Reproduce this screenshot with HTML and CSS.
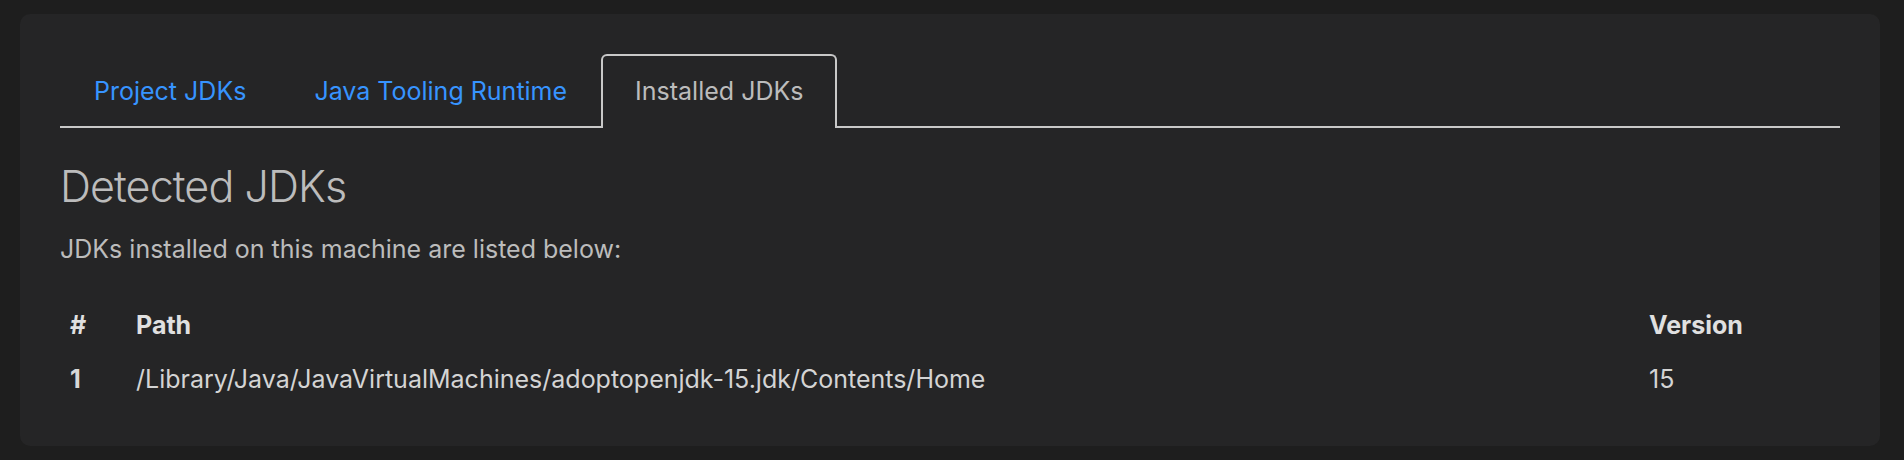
FILE: index.html
```html
<!DOCTYPE html>
<html lang="en">
<head>
<meta charset="utf-8">
<title>Installed JDKs</title>
<link rel="stylesheet" href="styles.css">
</head>
<body>
<main class="card">
  <nav class="tabs">
    <a class="tab">Project JDKs</a>
    <a class="tab">Java Tooling Runtime</a>
    <a class="tab active">Installed JDKs</a>
  </nav>
  <section class="panel">
    <h1 class="title">Detected JDKs</h1>
    <p class="desc">JDKs installed on this machine are listed below:</p>
    <div class="table">
      <div class="row head">
        <div class="cell num">#</div>
        <div class="cell path">Path</div>
        <div class="cell ver">Version</div>
      </div>
      <div class="row">
        <div class="cell num">1</div>
        <div class="cell path">/Library/Java/JavaVirtualMachines/adoptopenjdk-15.jdk/Contents/Home</div>
        <div class="cell ver">15</div>
      </div>
    </div>
  </section>
</main>
</body>
</html>
```
FILE: styles.css
```css
html, body {
  margin: 0;
  padding: 0;
  background: #1e1e1e;
}
body {
  padding: 14px 24px 14px 20px;
  font-family: Inter, "Noto Sans", sans-serif;
  font-size: 25px;
  color: #cccccc;
}
.card {
  box-sizing: border-box;
  height: 432px;
  background: #252526;
  border-radius: 10px;
  padding: 40px 40px 0 40px;
  display: flex;
  flex-direction: column;
}
.tabs {
  display: flex;
  border-bottom: 2px solid #c8c8c8;
}
.tab {
  display: block;
  padding: 17px 32px;
  line-height: 36px;
  border: 2px solid transparent;
  border-bottom: none;
  color: #3794ff;
  cursor: pointer;
}
.tab.active {
  color: #bcbcbc;
  border-color: #c8c8c8;
  border-radius: 6px 6px 0 0;
  background: #252526;
  margin-bottom: -2px;
  padding-bottom: 19px;
}
.panel {
  display: flex;
  flex-direction: column;
}
.title {
  margin: 0;
  margin-top: 30px;
  font-size: 43px;
  letter-spacing: -0.9px;
  font-weight: 300;
  line-height: 56px;
  color: #bcbcbc;
}
.desc {
  margin: 17px 0 0 0;
  line-height: 36px;
  color: #bcbcbc;
}
.table {
  margin-top: 31px;
  display: flex;
  flex-direction: column;
}
.row {
  display: grid;
  grid-template-columns: 66px 1fr 201px;
  line-height: 36px;
  padding: 9px 0;
}
.cell {
  padding: 0 10px;
}
.row.head .cell {
  font-weight: 700;
  color: #e0e0e0;
}
.cell.num {
  font-weight: 700;
  color: #d8d8d8;
}
.cell.path, .cell.ver {
  color: #d4d4d4;
}
```
